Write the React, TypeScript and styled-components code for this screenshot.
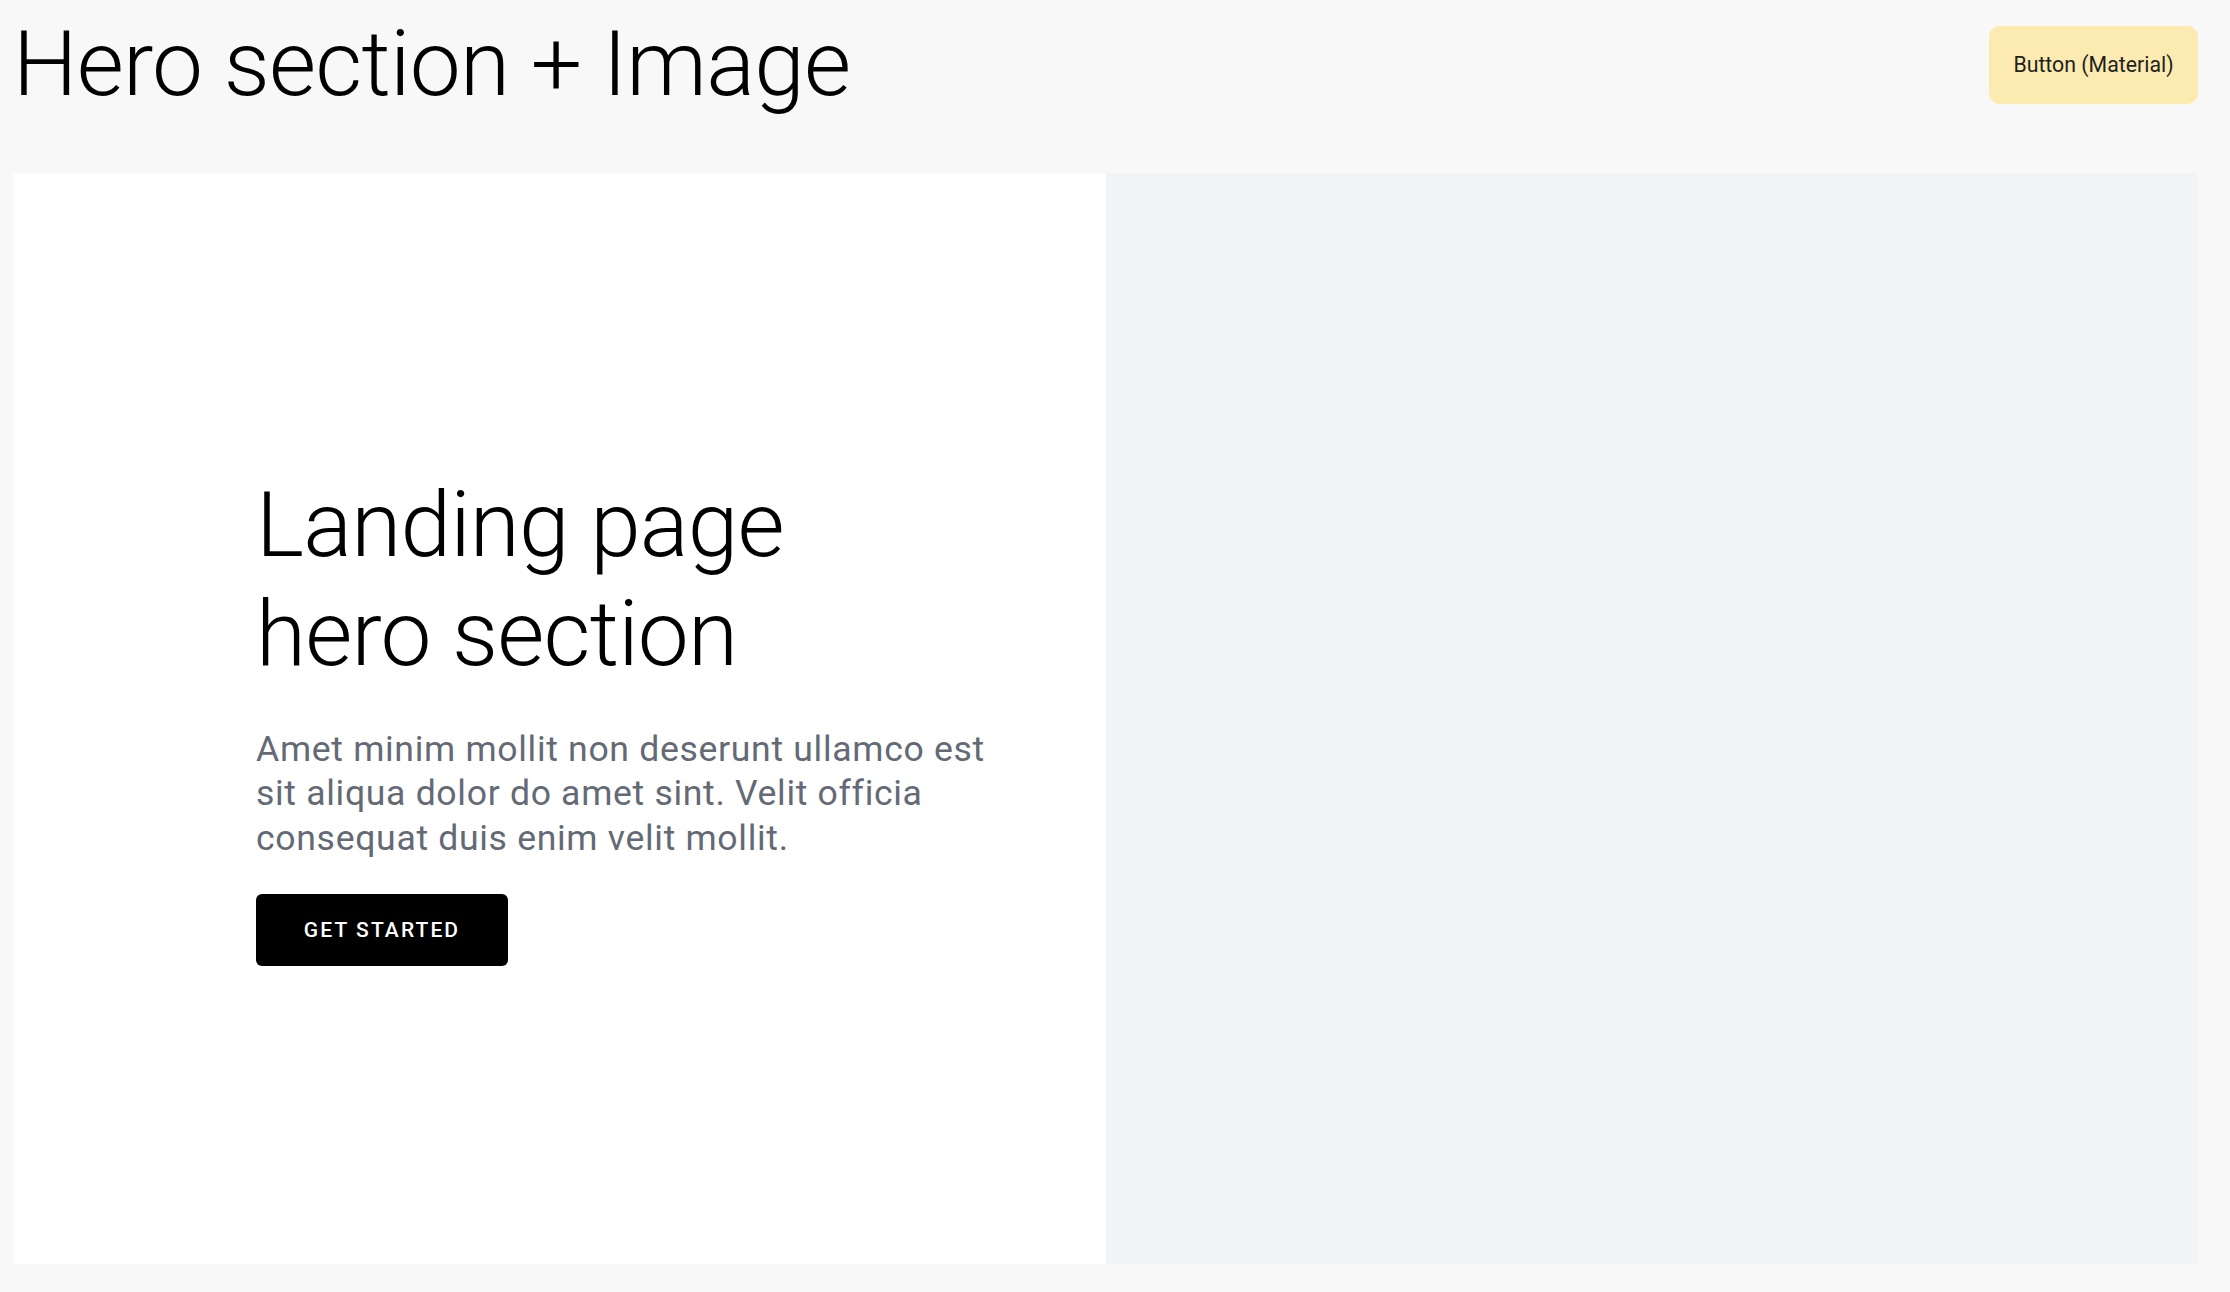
import React from "react";
import styled, { createGlobalStyle } from "styled-components";

const GlobalStyle = createGlobalStyle`
  * { box-sizing: border-box; }
  html, body { margin: 0; padding: 0; background: #f8f8f8; }
  body { font-family: Roboto, "Noto Sans", "Liberation Sans", sans-serif; }
`;

const Page = styled.div`
  min-height: 1292px;
  padding: 11px 32px 28px 13px;
  background: #f8f8f8;
`;

const Header = styled.header`
  display: flex;
  align-items: center;
  justify-content: space-between;
  height: 107px;
  margin-bottom: 55px;
`;

const Title = styled.h1`
  margin: 0;
  font-family: Roboto, sans-serif;
  font-weight: 300;
  font-size: 91px;
  line-height: 107px;
  color: #000;
  letter-spacing: -0.75px;
`;

const MaterialButton = styled.button`
  width: 209px;
  height: 78px;
  border: none;
  border-radius: 11px;
  background: #fcebb0;
  color: #1f1f1f;
  font-family: Roboto, sans-serif;
  font-size: 21.3px;
  font-weight: 400;
  cursor: pointer;
`;

const Card = styled.section`
  display: grid;
  grid-template-columns: 1093px 1fr;
  height: 1091px;
`;

const ContentPane = styled.div`
  display: flex;
  flex-direction: column;
  justify-content: center;
  align-items: flex-start;
  background: #ffffff;
  padding-left: 243px;
`;

const ImagePane = styled.div`
  background: #f2f3f5;
`;

const Heading = styled.h2`
  margin: 0 0 38px;
  font-family: Roboto, sans-serif;
  font-weight: 300;
  font-size: 91px;
  line-height: 109px;
  color: #000;
  letter-spacing: -0.8px;
`;

const Lead = styled.p`
  margin: 0 0 34px;
  max-width: 750px;
  font-family: Roboto, sans-serif;
  font-weight: 400;
  font-size: 35.6px;
  line-height: 44.4px;
  letter-spacing: 0.68px;
  color: #636a75;
`;

const PrimaryButton = styled.button`
  width: 252px;
  height: 72px;
  border: none;
  border-radius: 6px;
  background: #000;
  color: #fff;
  font-family: Roboto, sans-serif;
  font-size: 21px;
  font-weight: 500;
  letter-spacing: 2.1px;
  text-transform: uppercase;
  cursor: pointer;
`;

export default function App() {
  return (
    <>
      <GlobalStyle />
      <Page>
        <Header>
          <Title>Hero section + Image</Title>
          <MaterialButton>Button (Material)</MaterialButton>
        </Header>
        <Card>
          <ContentPane>
            <Heading>
              Landing page
              <br />
              hero section
            </Heading>
            <Lead>
              Amet minim mollit non deserunt ullamco est sit aliqua dolor do amet sint. Velit
              officia consequat duis enim velit mollit.
            </Lead>
            <PrimaryButton>Get started</PrimaryButton>
          </ContentPane>
          <ImagePane />
        </Card>
      </Page>
    </>
  );
}
